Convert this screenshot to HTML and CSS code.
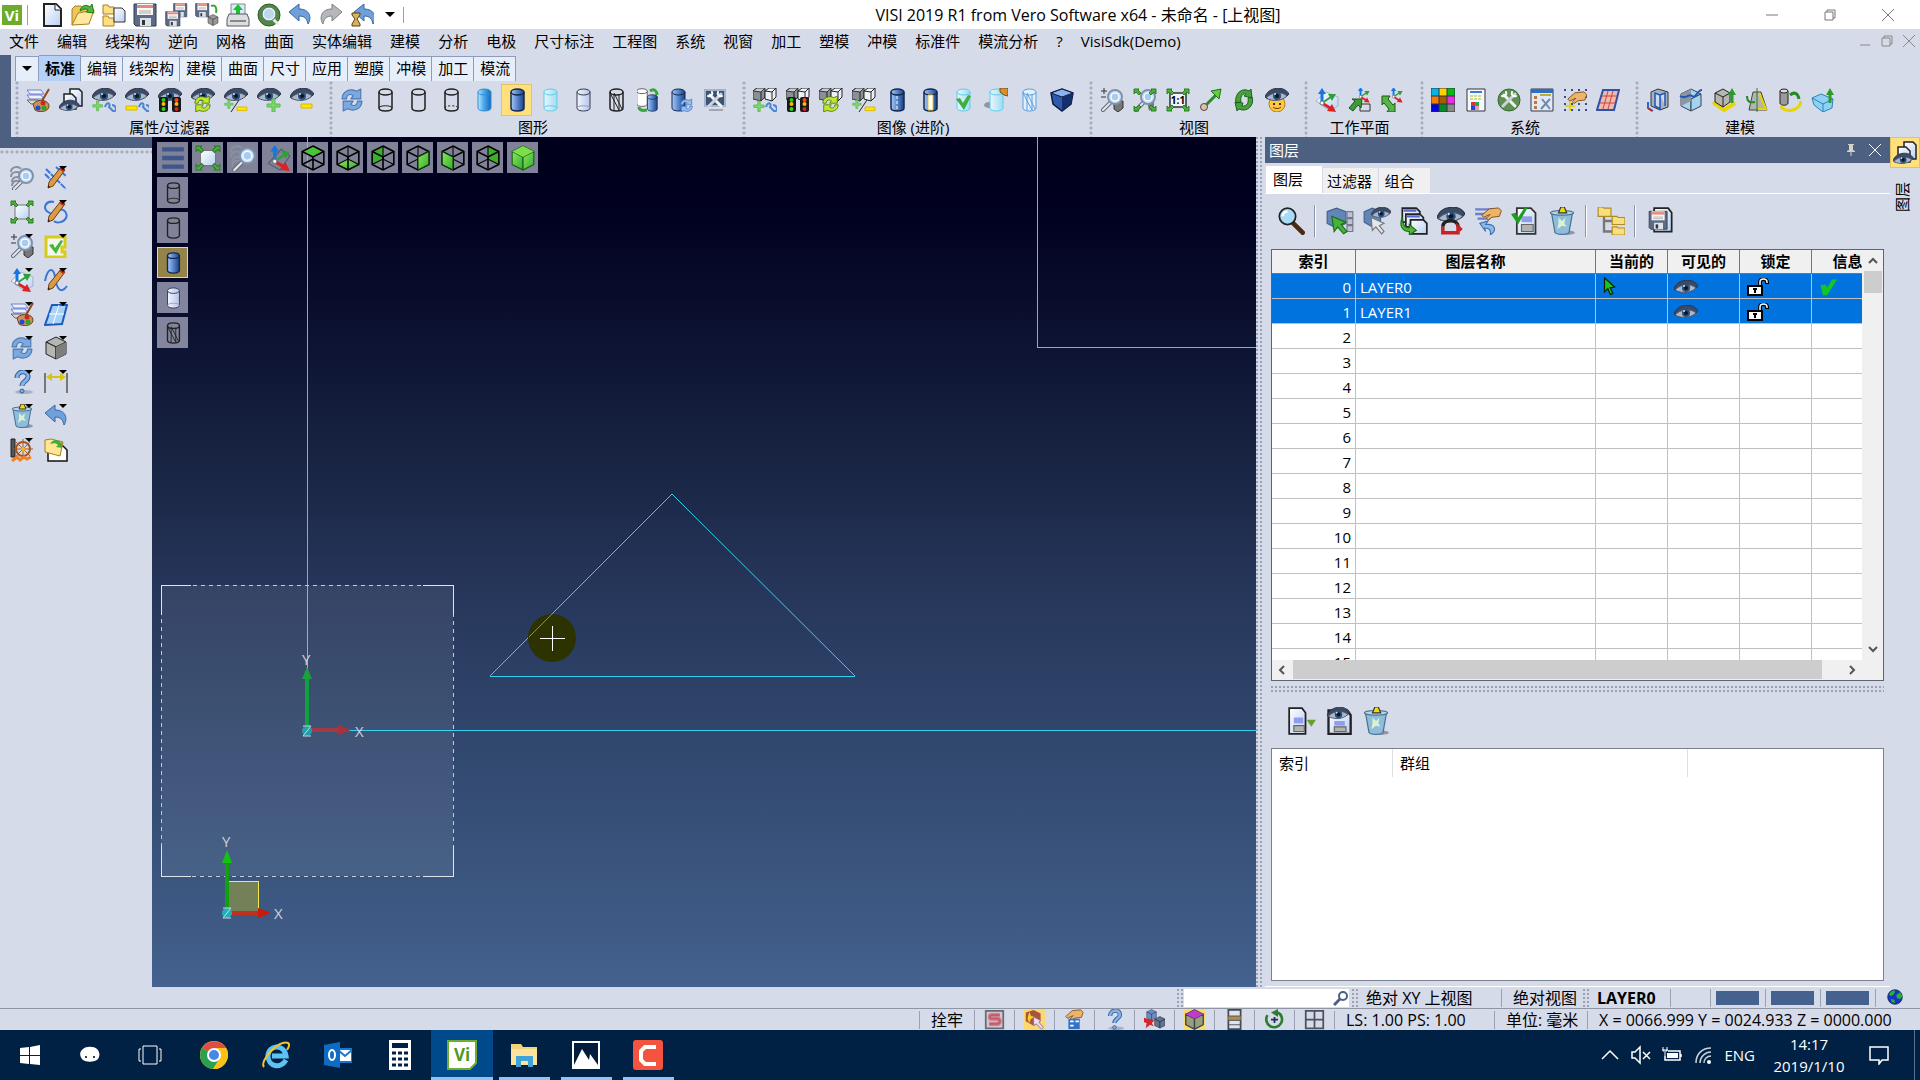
FILE: index.html
```html
<!DOCTYPE html>
<html lang="zh-CN">
<head>
  <meta charset="utf-8">
  <meta name="viewport" content="width=device-width, initial-scale=1">
  <title>VISI 2019 R1 from Vero Software x64</title>
  <link rel="stylesheet" href="styles.css">
</head>
<body>

<!-- icon sprite -->
<svg class="sprite" width="0" height="0" aria-hidden="true">
  <defs>
    <linearGradient id="blue"><stop offset="0" stop-color="#a9c8f5"/><stop offset=".5" stop-color="#5585cc"/><stop offset="1" stop-color="#1d3f80"/></linearGradient>
    <linearGradient id="sky"><stop offset="0" stop-color="#bfe6ff"/><stop offset=".4" stop-color="#4fb0ef"/><stop offset="1" stop-color="#1566b8"/></linearGradient>
    <linearGradient id="pale"><stop offset="0" stop-color="#eaf6ff"/><stop offset="1" stop-color="#9edcf2"/></linearGradient>
    <linearGradient id="glass"><stop offset="0" stop-color="#f2f6ff"/><stop offset="1" stop-color="#b5c4ea"/></linearGradient>
    <linearGradient id="green" x2="1" y2="1"><stop offset="0" stop-color="#8ce65e"/><stop offset="1" stop-color="#33ad2c"/></linearGradient>
    <linearGradient id="page" x2="1" y2="1"><stop offset="0" stop-color="#fff"/><stop offset="1" stop-color="#b9d0f2"/></linearGradient>

    <g id="eye">
      <path d="M0 9C3-1 19-3 24 6l-3 3C16 4 8 4 3 11z" fill="#3d4a63" stroke="#28334a"/>
      <path d="M1 10C6 4 17 3 22 8 17 13 8 14 1 10z" fill="#a9b8cd" stroke="#4a566e"/>
      <circle cx="12" cy="8" r="4" fill="#2b5078"/><circle cx="12" cy="8" r="2" fill="#0d1420"/><circle cx="10" cy="6" r="1" fill="#cfe0f2"/>
    </g>
    <g id="cyl"><path d="M6 4v16c0 4 13 4 13 0V4"/><ellipse cx="12.500" cy="4" rx="6.500" ry="3"/></g>
    <g id="cube" stroke-linejoin="round"><path d="M12 1l10 5-10 5L2 6z"/><path d="M2 6l10 5v12L2 18z"/><path d="M22 6l-10 5v12l10-5z"/></g>
    <g id="cubes"><path d="M0 3l4-3h8v9l-4 4-8-2z" fill="#8b8f96" stroke="#33363b"/><path d="M0 3l4-3h8L8 4z" fill="#c8cbd0" stroke="#33363b"/><path d="M8 4v9" stroke="#222"/><path d="M12 3l4-3h7v9l-4 4-7-2z" fill="#eef1f8" stroke="#222"/><path d="M12 3l7 1 4-4M19 4v9" fill="none" stroke="#222"/></g>
    <path id="plus" d="M6 0h3v5h5v3H9v5H6V8H1V5h5z" fill="#7bd96a" stroke="#5cb850"/>
    <path id="minus" d="M0 0h11v4H0z" fill="#ffe500" stroke="#d6b800"/>
    <path id="wave" d="M1 6c2-6 6-4 4 0l4 4c5 1 3-6-1-6" fill="none" stroke="#4b86d6" stroke-width="2"/>
    <g id="lights"><rect x="1" y="9" width="9" height="15" rx="2" fill="#181818"/><rect x="14" y="9" width="9" height="15" rx="2" fill="#181818"/><circle cx="5.500" cy="12" r="2" fill="#2c2"/><circle cx="5.500" cy="16" r="2" fill="#fb0"/><circle cx="5.500" cy="21" r="2" fill="#2d2"/><circle cx="18.500" cy="12" r="2" fill="#f42"/><circle cx="18.500" cy="16" r="2" fill="#fb0"/><circle cx="18.500" cy="21" r="2" fill="#d22"/></g>
    <g id="cycle" stroke-linejoin="round"><path d="M1 9C1 2 8-1 14 2l4-2v9h-9l2-3C8 4 5 5 5 9z"/><path d="M19 11c0 7-7 10-13 7l-4 2v-9h9l-2 3c3 2 6 1 6-3z"/></g>
    <g id="lens"><path d="M11 14L3 22" stroke="#666b75" stroke-width="4" stroke-linecap="round"/><path d="M11 14L3 22" stroke="#e3e8ef" stroke-width="2" stroke-linecap="round"/><circle cx="15" cy="9" r="7" fill="#cfe3f7" stroke="#7e92ad" stroke-width="2"/><circle cx="15" cy="9" r="4" fill="#a9cbef" stroke="#fff"/></g>
    <g id="corners" fill="#4caf3a" stroke="#2c7d25"><path d="M1 1h5L5 2l3 3-2 2-3-3-2 2z"/><path d="M23 1h-5l1 1-3 3 2 2 3-3 2 2z"/><path d="M1 23h5l-1-1 3-3-2-2-3 3-2-2z"/><path d="M23 23h-5l1-1-3-3 2-2 3 3 2-2z"/></g>
    <g id="axes"><path d="M7 15V4" stroke="#1477e0" stroke-width="3"/><path d="M7 0l4 6H3z" fill="#1477e0"/><path d="M7 15l9-6" stroke="#2fa038" stroke-width="2"/><path d="M21 6l-8 0 4 7z" fill="#2fa038"/><path d="M7 15l8 5" stroke="#d22" stroke-width="3"/><path d="M21 24l-9-1 5-7z" fill="#d22"/><circle cx="7" cy="15" r="2" fill="#fff" stroke="#777"/></g>
    <g id="pencil"><path d="M17 1l4 3L9 20l-5 2 1-6z" fill="#dd9a45" stroke="#6b3d12"/><path d="M17 1l4 3-2 2-4-3z" fill="#c62828"/><path d="M4 22l2-1-2-2z" fill="#222"/></g>
    <g id="floppy"><path d="M1 1h22v22H3l-2-2z" fill="#5d6b86" stroke="#2d3a55"/><path d="M4 1h16v11H4z" fill="#f7f7f7"/><path d="M4 2h16v3H4z" fill="#e58a77"/><path d="M6 8h12M6 10h12" stroke="#aaa"/><path d="M7 15h11v8H7z" fill="#dde2ea"/><path d="M9 17h3v5H9z" fill="#333"/></g>
    <g id="bin"><ellipse cx="15" cy="22" rx="8" ry="2" fill="#8f96a6"/><path d="M3 5h18l-3 17c-2 2-10 2-12 0z" fill="#8ebcda" stroke="#48708f"/><path d="M9 9l3 3 3-3-1 5 2 3-4-1-4 3 1-5z" fill="#d9f3d2"/><ellipse cx="12" cy="5" rx="10" ry="2" fill="#b9d6e8" stroke="#48708f"/><path d="M9 5l2-5h3l2 5z" fill="#f0dc00" stroke="#333"/></g>
    <g id="tools" stroke-linecap="round"><path d="M7 7l11 11" stroke="#f1f1f1" stroke-width="3"/><path d="M18 6L6 18" stroke="#cdd3db" stroke-width="3"/><path d="M5 8a3 3 0 0 0 4-4M19 8a3 3 0 0 1-4-4" fill="none" stroke="#fff" stroke-width="2"/></g>
    <g id="hand"><path d="M2 9l8-7 10-1 3 3-2 6-8 1-4 3-2-2 4-4-7 3z" fill="#eeb469" stroke="#7d4d17"/></g>
    <path id="undo" d="M1 9l10-8v5c11 0 13 9 9 15-1-5-3-8-9-8v5z"/>
    <path id="caret" d="M15 0h8l-4 4z"/>
    <g id="wire" fill="none" stroke="#000" stroke-width="1.500"><path d="M12 1l10 5v12l-10 5-10-5V6z"/><path d="M2 6l10 5 10-5M12 11v12"/><path d="M12 1v12M2 18l10-5 10 5" stroke-width="1"/></g>
  </defs>

  <symbol id="i-new" viewBox="0 0 24 24"><path d="M4 1h12l5 5v17H4z" fill="url(#page)" stroke="#222" stroke-width="2"/><path d="M15 1v6h6" fill="#fff" stroke="#222"/></symbol>
  <symbol id="i-open" viewBox="0 0 24 24"><path d="M1 22V6l3-3h6l2 3h9v4" fill="#eec65a" stroke="#a87f1c"/><path d="M1 22L7 10l16-3-5 14z" fill="#ffe9a0" stroke="#a87f1c"/><path d="M9 8c1-6 7-7 10-4l2-3 2 9-8-1 2-2c-2-2-4-1-8 1z" fill="#4fb53b" stroke="#247a1c"/></symbol>
  <symbol id="i-folders" viewBox="0 0 24 24"><path d="M1 2h5l1 2h5v7H1zM1 13h5l1 2h5v8H1z" fill="#ffdf86" stroke="#a87f1c"/><path d="M12 5h8l3 3v11H12z" fill="url(#page)" stroke="#333"/></symbol>
  <symbol id="i-save" viewBox="0 0 24 24"><use href="#floppy"/></symbol>
  <symbol id="i-saveall" viewBox="0 0 24 24"><use href="#floppy" transform="translate(9) scale(.6)"/><use href="#floppy" transform="translate(1 8) scale(.65)"/></symbol>
  <symbol id="i-saveas" viewBox="0 0 24 24"><use href="#floppy" transform="scale(.6)"/><path d="M16 3c5-2 6 3 5 7" fill="none" stroke="#3aa53a" stroke-width="2"/><use href="#cube" transform="translate(12 11) scale(.5)" fill="#999" stroke="#333"/></symbol>
  <symbol id="i-print" viewBox="0 0 24 24"><path d="M5 1h14v12H5z" fill="#d9ecff" stroke="#888"/><path d="M12 1l5 6h-3v4h-4V7H7z" fill="#1cc22c"/><path d="M3 11h18l2 5v7H1v-7z" fill="#dcdde1" stroke="#55585e"/><path d="M4 18h16" stroke="#888" stroke-width="2"/></symbol>
  <symbol id="i-preview" viewBox="0 0 24 24"><circle cx="12" cy="12" r="11" fill="#4f8a45" stroke="#2d5b28"/><path d="M15 15l6 6" stroke="#e9e9e9" stroke-width="3"/><circle cx="12" cy="11" r="6" fill="#bcd8ea" stroke="#e7eef4" stroke-width="2"/><circle cx="12" cy="11" r="7" fill="none" stroke="#5b6b74"/></symbol>
  <symbol id="i-undo" viewBox="0 0 24 24"><use href="#undo" fill="#6fa0da" stroke="#3a659e"/></symbol>
  <symbol id="i-redo" viewBox="0 0 24 24"><use href="#undo" transform="matrix(-1 0 0 1 24 0)" fill="#b5b7ba" stroke="#7d7f82"/></symbol>
  <symbol id="i-history" viewBox="0 0 24 24"><use href="#undo" transform="translate(3)" fill="#6fa0da" stroke="#3a659e"/><path d="M2 10h8v2l-3 4 3 5v2H2v-2l3-5-3-4z" fill="#d9b25b" stroke="#5b3e12"/></symbol>

  <symbol id="i-palette" viewBox="0 0 24 24"><path d="M1 2h14l3 4H4zM1 7h14l3 4H4z" fill="#eef2ff" stroke="#6c7fd0"/><path d="M1 12h11l3 4H5z" fill="#d5d5d2" stroke="#666"/><path d="M7 16c5-6 16-4 16 2s-10 7-14 4z" fill="#c9925a" stroke="#6d431b"/><circle cx="12" cy="20" r="2.500" fill="#2347d8"/><circle cx="18" cy="20" r="2.500" fill="#28a828"/><circle cx="17" cy="15" r="2.500" fill="#d82222"/><path d="M23 1l-7 12" stroke="#8b4a1c" stroke-width="2"/></symbol>
  <symbol id="i-layers" viewBox="0 0 24 24"><path d="M11 1h9l3 3v14H11z" fill="url(#page)" stroke="#222" stroke-width="1.500"/><path d="M5 6h8l4 4v11H5z" fill="url(#page)" stroke="#222" stroke-width="1.500"/><use href="#eye" transform="translate(0 12) scale(.85)"/></symbol>
  <symbol id="i-eyewave" viewBox="0 0 24 24"><use href="#eye"/><use href="#plus" transform="translate(0 13) scale(.75)"/><use href="#wave" transform="translate(12 13)"/></symbol>
  <symbol id="i-eyeminus" viewBox="0 0 24 24"><use href="#eye"/><use href="#minus" transform="translate(1 18)"/><use href="#wave" transform="translate(13 13)"/></symbol>
  <symbol id="i-eyelights" viewBox="0 0 24 24"><use href="#eye"/><use href="#lights"/></symbol>
  <symbol id="i-eyecycle" viewBox="0 0 24 24"><use href="#eye"/><use href="#cycle" transform="translate(3 8) scale(.85 .8)" fill="#c5e52c" stroke="#3f7a14"/></symbol>
  <symbol id="i-eyepm" viewBox="0 0 24 24"><use href="#eye"/><use href="#plus" transform="translate(0 12) scale(.65)"/><path d="M15 12L7 24" stroke="#222"/><use href="#minus" transform="translate(13 19) scale(.9)"/></symbol>
  <symbol id="i-eyeplus" viewBox="0 0 24 24"><use href="#eye"/><use href="#plus" transform="translate(9 11)"/></symbol>
  <symbol id="i-eyedel" viewBox="0 0 24 24"><use href="#eye"/><use href="#minus" transform="translate(11 16)"/></symbol>

  <symbol id="i-refresh" viewBox="0 0 24 24"><use href="#cycle" transform="translate(1 1) scale(1.100)" fill="#7ba9de" stroke="#4a78b3"/></symbol>
  <symbol id="i-cylwire" viewBox="0 0 24 24"><use href="#cyl" fill="none" stroke="#222" stroke-width="1.500"/><path d="M6 20c0-3 13-3 13 0" fill="none" stroke="#222"/></symbol>
  <symbol id="i-cylhid" viewBox="0 0 24 24"><use href="#cyl" fill="none" stroke="#222" stroke-width="1.500"/></symbol>
  <symbol id="i-cyldash" viewBox="0 0 24 24"><use href="#cyl" fill="none" stroke="#222" stroke-width="1.500"/><path d="M6 20c0-3 13-3 13 0" fill="none" stroke="#222" stroke-dasharray="2 2"/></symbol>
  <symbol id="i-cylsky" viewBox="0 0 24 24"><use href="#cyl" fill="url(#sky)" stroke="#2f8fd6"/></symbol>
  <symbol id="i-cylblue" viewBox="0 0 24 24"><use href="#cyl" fill="url(#blue)" stroke="#14284f" stroke-width="1.500"/></symbol>
  <symbol id="i-cylpale" viewBox="0 0 24 24"><use href="#cyl" fill="url(#pale)" stroke="#5fcdea"/><path d="M6 20c0-3 13-3 13 0" fill="none" stroke="#5fcdea"/></symbol>
  <symbol id="i-cylglass" viewBox="0 0 24 24"><use href="#cyl" fill="url(#glass)" stroke="#333a4f"/><path d="M6 20c0-3 13-3 13 0" fill="none" stroke="#8d9bc0"/></symbol>
  <symbol id="i-cylmesh" viewBox="0 0 24 24"><use href="#cyl" fill="none" stroke="#222" stroke-width="1.500"/><path d="M10 6v16M15 6v16M6 5l9 17M10 5l8 16" stroke="#222"/></symbol>
  <symbol id="i-cylswap" viewBox="0 0 24 24"><use href="#cyl" transform="translate(-5 0) scale(.8)" fill="#fff" stroke="#444"/><use href="#cyl" transform="translate(6 6) scale(.75)" fill="url(#blue)" stroke="#14284f"/><path d="M13 3c4-3 7 0 7 4M2 19c0 3 3 4 8 3" fill="none" stroke="#3aa53a" stroke-width="3"/></symbol>
  <symbol id="i-cylref" viewBox="0 0 24 24"><use href="#cyl" transform="translate(-4 0)" fill="url(#blue)" stroke="#14284f"/><use href="#cycle" transform="translate(10 11) scale(.65)" fill="#8fbdf0" stroke="#3e70b5"/></symbol>
  <symbol id="i-settings" viewBox="0 0 24 24"><path d="M2 2h20v16H2z" fill="#3a5276" stroke="#a7b2c4" stroke-width="2"/><use href="#tools"/><path d="M6 22h14" stroke="#a0a6b4" stroke-width="2"/></symbol>

  <symbol id="i-boxwave" viewBox="0 0 24 24"><use href="#cubes"/><use href="#plus" transform="translate(0 13) scale(.8)"/><use href="#wave" transform="translate(12 13)"/></symbol>
  <symbol id="i-boxlights" viewBox="0 0 24 24"><use href="#cubes"/><use href="#lights"/></symbol>
  <symbol id="i-boxcycle" viewBox="0 0 24 24"><use href="#cubes"/><use href="#cycle" transform="translate(3 8) scale(.85 .8)" fill="#c5e52c" stroke="#3f7a14"/></symbol>
  <symbol id="i-boxpm" viewBox="0 0 24 24"><use href="#cubes"/><use href="#plus" transform="translate(0 12) scale(.65)"/><path d="M15 12L7 24" stroke="#222"/><use href="#minus" transform="translate(13 19) scale(.9)"/></symbol>
  <symbol id="i-cyldot" viewBox="0 0 24 24"><use href="#cyl" fill="url(#blue)" stroke="#14284f" stroke-width="1.500"/><path d="M12 8v15" stroke="#fff" stroke-dasharray="3 2"/></symbol>
  <symbol id="i-cylband" viewBox="0 0 24 24"><use href="#cyl" fill="url(#blue)" stroke="#14284f" stroke-width="1.500"/><path d="M10 7h5v15h-5z" fill="#fff" stroke="#e3c33a"/></symbol>
  <symbol id="i-cylok" viewBox="0 0 24 24"><use href="#cyl" fill="url(#pale)" stroke="#5fcdea"/><path d="M5 11l4-1 3 5 5-8 3 1-7 14z" fill="#3fae3b"/></symbol>
  <symbol id="i-cyltag" viewBox="0 0 24 24"><ellipse cx="5" cy="17" rx="5" ry="3" fill="#8f96a6"/><use href="#cyl" fill="url(#pale)" stroke="#5fcdea"/><path d="M16 0h8v8l-4-1-4-3z" fill="#d6922f" stroke="#7d4d17"/></symbol>
  <symbol id="i-cylnet" viewBox="0 0 24 24"><use href="#cyl" fill="#e2eefb" stroke="#5b9fdd"/><path d="M10 6v16M15 6v16M6 5l9 17M10 5l8 16" stroke="#5b9fdd"/></symbol>
  <symbol id="i-gem" viewBox="0 0 24 24"><path d="M1 5l11-4 11 4-2 11-9 7-9-7z" fill="#2d5aaf" stroke="#0c1d40" stroke-width="1.500"/><path d="M1 5l11 4 11-4-11-4z" fill="#8db4ee" stroke="#0c1d40"/><path d="M12 9v14l9-7 2-11z" fill="#14306c"/></symbol>

  <symbol id="i-zoompm" viewBox="0 0 24 24"><path d="M14 13h9v7l-5 4-4-3z" fill="#777" stroke="#333"/><use href="#lens"/><path d="M1 3h6M4 0v6M1 9h5" stroke="#333"/></symbol>
  <symbol id="i-zoomfit" viewBox="0 0 24 24"><path d="M14 13h7v7l-5 3z" fill="#777"/><use href="#lens"/><use href="#corners"/></symbol>
  <symbol id="i-arrow" viewBox="0 0 24 24"><path d="M5 19L18 6" stroke="#2b8c2b" stroke-width="3"/><path d="M22 1l-2 10-8-8z" fill="#5fcf3e" stroke="#20701d"/><circle cx="5" cy="19" r="3.500" fill="#d8c3b2" stroke="#5b4636"/></symbol>
  <symbol id="i-orbit" viewBox="0 0 24 24"><path d="M4 15C2 6 10-1 17 3l2-2 1 9-8-2 2-2c-4-1-6 3-5 8zM20 9c3 8-5 16-13 12l-2 2-2-9 8 1-1 3c5 1 7-4 6-8z" fill="#45a33a" stroke="#1e5f1b"/></symbol>
  <symbol id="i-face" viewBox="0 0 24 24"><circle cx="12" cy="16" r="8" fill="#ffc843" stroke="#b97c10"/><use href="#eye"/><circle cx="9" cy="16" r="1"/><circle cx="15" cy="16" r="1"/><path d="M8 19c2 2 6 2 8 0" fill="none" stroke="#5c3600"/></symbol>
  <symbol id="i-axes" viewBox="0 0 24 24"><path d="M1 13L11 4l12 5v9l-8 5z" fill="url(#page)" stroke="#9fb3cc"/><use href="#axes"/></symbol>
  <symbol id="i-axesdark" viewBox="0 0 24 24"><path d="M3 17L15 4l8 6-9 13z" fill="none" stroke="#555b6a"/><use href="#axes" transform="translate(2)"/></symbol>
  <symbol id="i-axesto" viewBox="0 0 24 24"><use href="#axes" transform="translate(8 -1) scale(.65)"/><path d="M12 16h10v7H12z" fill="none" stroke="#333"/><path d="M1 20l6-7-3-2h10l-1 9-3-3-5 6z" fill="#3d9c35" stroke="#1c5718"/></symbol>
  <symbol id="i-axesswap" viewBox="0 0 24 24"><use href="#axes" transform="translate(8 -1) scale(.65)"/><path d="M1 8h8l-2 3 5 6 2-2v9H6l2-3-5-6-2 2z" fill="#55b545" stroke="#1c5718"/></symbol>
  <symbol id="i-colors" viewBox="0 0 24 24"><path d="M0 0h8v8H0z" fill="#00b7e8"/><path d="M8 0h8v8H8z" fill="#ffd400"/><path d="M16 0h8v8h-8z" fill="#0b1"/><path d="M0 8h8v8H0z" fill="#f57c00"/><path d="M8 8h8v8H8z" fill="#a65b00"/><path d="M16 8h8v8h-8z" fill="#f02be8"/><path d="M0 16h8v8H0z" fill="#00d"/><path d="M8 16h8v8H8z" fill="#078a24"/><path d="M16 16h8v8h-8z" fill="#888"/><path d="M0 0h24v24H0zM8 0v24M16 0v24M0 8h24M0 16h24" fill="none" stroke="#334"/></symbol>
  <symbol id="i-doc" viewBox="0 0 24 24"><path d="M3 1h18v22H3z" fill="#f4f8ff" stroke="#333"/><path d="M6 4h12" stroke="#3a7bd0" stroke-width="2"/><path d="M6 8h12M6 11h12" stroke="#b8b431" stroke-dasharray="3 1"/><path d="M7 14h4v4H7z" fill="#d33"/><path d="M11 14h4v4h-4z" fill="#2a4"/><path d="M7 18h4v4H7z" fill="#24d"/><path d="M11 18h4v4h-4z" fill="#e9a"/></symbol>
  <symbol id="i-wrench" viewBox="0 0 24 24"><circle cx="12" cy="12" r="11" fill="#5c9150" stroke="#3d6436"/><use href="#tools"/></symbol>
  <symbol id="i-config" viewBox="0 0 24 24"><path d="M1 1h22v22H1z" fill="#dfe9f8" stroke="#333c4f"/><path d="M1 1h22v4H1z" fill="#2f6fc1"/><path d="M4 8h3v3H4zM4 13h3v3H4zM4 18h3v3H4z" fill="#c0763a"/><path d="M10 7h11" stroke="#c2aa2c" stroke-width="2"/><path d="M11 21l9-10M12 11l8 10" stroke="#7486a6" stroke-width="2"/></symbol>
  <symbol id="i-snap" viewBox="0 0 24 24"><path d="M1 2h23M1 9h23M1 16h23M1 22h23" stroke="#34508c" stroke-width="2" stroke-dasharray="2 5"/><use href="#hand" transform="translate(3 3) scale(.9)"/><path d="M7 13v10M2 18h10" stroke="#e7d21b" stroke-width="2"/></symbol>
  <symbol id="i-grid" viewBox="0 0 24 24"><path d="M7 2h16l-5 20H1z" fill="#f2b7ae" stroke="#2b53a8" stroke-width="2"/><path d="M12 3L7 21M17 3l-5 18M6 8h15M4 15h15" stroke="#c8493c"/></symbol>
  <symbol id="i-block" viewBox="0 0 24 24"><path d="M5 4l7-3 10 3v15l-8 3-9-4z" fill="#a9b0ba" stroke="#30343b"/><path d="M9 5v13l5 3V7zM14 7l5-2v13" fill="#c9d9f0" stroke="#1b57b8" stroke-width="1.500"/><path d="M2 14v6l5 3" stroke="#1a6fd6" fill="none" stroke-width="2"/><path d="M2 20l4 3" stroke="#c22" stroke-width="2"/></symbol>
  <symbol id="i-split" viewBox="0 0 24 24"><use href="#cube" fill="#a4d3ef" stroke="#39424f"/><path d="M2 6l10-5v12L2 18z" fill="#8f959f"/><path d="M1 8c7 4 8-3 12 0s5-6 10-6" fill="none" stroke="#2058b8" stroke-width="2"/></symbol>
  <symbol id="i-extrude" viewBox="0 0 24 24"><path d="M1 14l11 8 11-7" fill="none" stroke="#e9d500" stroke-width="4"/><path d="M3 5l8-4 7 4v9l-7 5-8-5z" fill="#b6b6b0" stroke="#222"/><path d="M3 5l8 4 7-4M11 9v10" fill="none" stroke="#222"/><path d="M20 15V5" stroke="#2c9a2c" stroke-width="3"/><path d="M20 0l4 7h-8z" fill="#2c9a2c"/></symbol>
  <symbol id="i-revolve" viewBox="0 0 24 24"><path d="M8 4h8l6 18H4z" fill="#b4b4ae" stroke="#444"/><path d="M14 5l7 16h-8" fill="none" stroke="#e9d500" stroke-width="2"/><path d="M12 0v24" stroke="#2a7a2a"/><path d="M2 8c0 6 3 7 8 6" fill="none" stroke="#278a2a" stroke-width="2"/></symbol>
  <symbol id="i-sweep" viewBox="0 0 24 24"><path d="M2 3v12c0 3 8 3 8 0V3" fill="#9a9a98" stroke="#222"/><ellipse cx="6" cy="3" rx="4" ry="2" fill="#ddd" stroke="#222"/><path d="M3 18c2 7 19 6 20-5" fill="none" stroke="#e9d500" stroke-width="3"/><path d="M12 7c5-4 8-1 9 4" fill="none" stroke="#278a2a" stroke-width="3"/></symbol>
  <symbol id="i-surface" viewBox="0 0 24 24"><path d="M1 10l9-4 12 5-1 9-9 4-9-7z" fill="#8ed1f2" stroke="#2f82bb"/><path d="M1 10l11 6 10-5M12 16v8" fill="none" stroke="#2f82bb"/><path d="M19 15V5" stroke="#2c9a2c" stroke-width="3"/><path d="M19 0l4 7h-8z" fill="#2c9a2c"/></symbol>

  <symbol id="i-zooms" viewBox="0 0 24 24"><path d="M1 6c0-6 8-6 10-3M1 11c0-6 8-6 10-3M2 16c0-5 5-6 8-4M2 20c0-4 3-6 7-5" fill="none" stroke="#8a919e" stroke-width="2"/><use href="#lens" transform="translate(1 1)"/></symbol>
  <symbol id="i-fit" viewBox="0 0 24 24"><path d="M5 5h14v14H5z" fill="url(#page)" stroke="#777"/><use href="#corners"/></symbol>
  <symbol id="i-line" viewBox="0 0 24 24"><path d="M2 3l20 20M1 8l6 6M12 1l10 9" stroke="#3a76d6" stroke-width="2" stroke-dasharray="6 1"/><use href="#pencil"/><use href="#caret"/></symbol>
  <symbol id="i-curve" viewBox="0 0 24 24"><path d="M10 2C2 0-2 8 4 12s8 0 12-2 8 4 6 8-9 6-12 3" fill="none" stroke="#3a76d6" stroke-width="2"/><use href="#pencil"/><use href="#caret"/></symbol>
  <symbol id="i-check" viewBox="0 0 24 24"><path d="M2 3h19v10h-3v5h3v5H2z" fill="#f4f6f0" stroke="#d9cb17" stroke-width="3"/><path d="M5 11l4-1 2 4 6-8 2 1-7 13z" fill="#44b53c"/><use href="#caret"/></symbol>
  <symbol id="i-spline" viewBox="0 0 24 24"><path d="M1 13C4-2 10 0 11 9s5 19 12 9" fill="none" stroke="#3a76d6" stroke-width="2"/><use href="#pencil"/><use href="#caret"/></symbol>
  <symbol id="i-plane" viewBox="0 0 24 24"><path d="M8 3h15l-5 19-17 1z" fill="#a9d2fa" stroke="#1d5cb8" stroke-width="2"/><path d="M15 3l-6 19M5 12h15" stroke="#fff"/><use href="#caret"/></symbol>
  <symbol id="i-solid" viewBox="0 0 24 24"><use href="#cube" fill="#b5b6b3" stroke="#222"/><path d="M22 6l-10 5v12l10-5z" fill="#7e7f7d"/><use href="#caret"/></symbol>
  <symbol id="i-help" viewBox="0 0 24 24"><ellipse cx="14" cy="22" rx="9" ry="2" fill="#a9b0c2"/><path d="M7 8c0-8 12-8 11-1 0 4-6 4-6 9" fill="none" stroke="#325f9f" stroke-width="5"/><path d="M7 8c0-8 12-8 11-1 0 4-6 4-6 9" fill="none" stroke="#86b1e4" stroke-width="3"/><circle cx="12" cy="21" r="2" fill="#86b1e4" stroke="#325f9f"/></symbol>
  <symbol id="i-dim" viewBox="0 0 24 24"><path d="M1 3v20M23 3v20" stroke="#777" stroke-width="2"/><path d="M4 7h16" stroke="#d8c40c" stroke-width="2"/><path d="M2 7l6-4v8zM22 7l-6-4v8z" fill="#d8c40c"/><use href="#caret"/></symbol>
  <symbol id="i-bin" viewBox="0 0 24 24"><use href="#bin"/></symbol>
  <symbol id="i-helm" viewBox="0 0 24 24"><path d="M1 1h4v18H1z" fill="#555" stroke="#222"/><circle cx="13" cy="11" r="7" fill="none" stroke="#a5561f" stroke-width="2"/><path d="M13 1v20M3 11h20M6 4l14 14M20 4L6 18" stroke="#a5561f"/><path d="M2 23l5-4 3 3 4-3 3 2 4-2" fill="none" stroke="#f08020" stroke-width="3"/><circle cx="13" cy="11" r="2" fill="#ffb31a"/></symbol>
  <symbol id="i-import" viewBox="0 0 24 24"><path d="M4 8h15l4 4v11H4z" fill="#fff" stroke="#111" stroke-width="1.500"/><path d="M1 2l6-1 12 3-3 14L1 14z" fill="#ffe694" stroke="#a5801e"/><path d="M6 6c3-5 8-5 11-1l1-2v7l-6-1 2-2c-2-2-4-2-8-1z" fill="#43ad35"/></symbol>

  <symbol id="i-top" viewBox="0 0 24 24"><path d="M12 1l10 5-10 5L2 6z" fill="#4cc437"/><path d="M12 1l10 5v12l-10 5-10-5V6zM2 6l10 5 10-5M12 11v12M2 18l10-5 10 5" fill="none" stroke="#000" stroke-width="1.500"/></symbol>
  <symbol id="i-bottom" viewBox="0 0 24 24"><path d="M12 13l10 5-10 5-10-5z" fill="url(#green)"/><use href="#wire"/></symbol>
  <symbol id="i-back" viewBox="0 0 24 24"><path d="M2 6l10-5v12L2 18z" fill="#3cb02e"/><use href="#wire"/></symbol>
  <symbol id="i-front" viewBox="0 0 24 24"><use href="#wire"/><path d="M12 11l10-5v12l-10 5z" fill="url(#green)" stroke="#0c3a08"/></symbol>
  <symbol id="i-left" viewBox="0 0 24 24"><use href="#wire"/><path d="M2 6l10 5v12L2 18z" fill="url(#green)" stroke="#0c3a08"/></symbol>
  <symbol id="i-right" viewBox="0 0 24 24"><path d="M12 1l10 5v12l-10-5z" fill="#3cb02e"/><use href="#wire"/></symbol>
  <symbol id="i-iso" viewBox="0 0 24 24"><use href="#cube" fill="url(#green)" stroke="#155c10"/><path d="M12 1l10 5-10 5L2 6z" fill="#7dde4c"/></symbol>
  <symbol id="i-bars" viewBox="0 0 24 24"><path d="M2 4h20M2 12h20M2 20h20" stroke="#3f568b" stroke-width="4"/></symbol>

  <symbol id="i-search" viewBox="0 0 24 24"><path d="M14 14l8 8" stroke="#4b2a14" stroke-width="4" stroke-linecap="round"/><circle cx="9" cy="8" r="7" fill="#a9daf6" stroke="#222" stroke-width="1.500"/><path d="M5 8c0-3 2-4 4-4" fill="none" stroke="#fff" stroke-width="2"/></symbol>
  <symbol id="i-pick" viewBox="0 0 24 24"><path d="M1 4l8-3 8 3v10l-8 4-8-4z" fill="#6386b8" stroke="#43618d"/><path d="M18 4h5v5h-5zM18 10h5v5h-5zM18 16h5v5h-5z" fill="#b9c6d4" stroke="#778"/><path d="M5 8l12 5-4 2 5 6-3 2-5-6-3 4z" fill="#46b23a" stroke="#1f6d1a"/></symbol>
  <symbol id="i-pickeye" viewBox="0 0 24 24"><path d="M1 4l7-3 7 3v9l-7 4-7-4z" fill="#6386b8" stroke="#43618d"/><use href="#eye" transform="translate(7) scale(.72)"/><path d="M7 9l11 5-4 2 4 5-2 2-5-6-3 3z" fill="#e4e7ee" stroke="#777"/></symbol>
  <symbol id="i-sheets" viewBox="0 0 24 24"><path d="M2 1h12l3 3v9H2z" fill="url(#page)" stroke="#222" stroke-width="1.500"/><path d="M5 6h12l3 3v8H5z" fill="url(#page)" stroke="#222" stroke-width="1.500"/><path d="M9 11h11l3 3v9H9z" fill="url(#page)" stroke="#222" stroke-width="1.500"/><path d="M3 3h11M6 8h11" stroke="#5966cf" stroke-width="2"/><path d="M2 9c0 6 2 9 6 9v-3l6 5-6 4v-3c-6 0-9-5-6-12z" fill="#4fb53b" stroke="#1f6d1a"/></symbol>
  <symbol id="i-eyered" viewBox="0 0 24 24"><use href="#eye"/><path d="M5 17c0-7 13-7 13 0" fill="none" stroke="#222" stroke-width="3"/><path d="M5 17v5h13v-5l3 3" fill="none" stroke="#c92222" stroke-width="3"/></symbol>
  <symbol id="i-handlayer" viewBox="0 0 24 24"><path d="M1 2h14M1 6h12M3 10h11" stroke="#6c7fd0" stroke-width="2"/><use href="#hand" transform="translate(5)scale(.8)"/><path d="M5 14l7-2-2 3c8-1 10 5 4 9 1-5-2-6-5-6l1 3z" fill="#8fb9e8" stroke="#4173b2"/></symbol>
  <symbol id="i-checkdoc" viewBox="0 0 24 24"><path d="M5 1h12l4 4v18H5z" fill="url(#page)" stroke="#333" stroke-width="1.500"/><path d="M9 8h9v5H9z" fill="#8f9cf0"/><path d="M9 15h10v6H9z" fill="#b3b3ae" stroke="#666"/><path d="M0 6l4-1 2 4 6-9 2 1-8 14z" fill="#1f9c1f"/></symbol>
  <symbol id="i-tree" viewBox="0 0 24 24"><path d="M6 8v13h9M6 12h9" fill="none" stroke="#777" stroke-width="2"/><path d="M1 0h4l1 1h6v7H1zM13 8h4l1 1h6v6H13zM13 17h4l1 1h6v6H13z" fill="#f8df7d" stroke="#b18b26"/></symbol>
  <symbol id="i-savedoc" viewBox="0 0 24 24"><path d="M7 1h12l3 4v16H7z" fill="url(#page)" stroke="#222" stroke-width="1.500"/><use href="#floppy" transform="translate(2 3) scale(.7)"/></symbol>
  <symbol id="i-adddoc" viewBox="0 0 24 24"><path d="M1 1h11l3 4v18H1z" fill="url(#page)" stroke="#222" stroke-width="1.500"/><path d="M5 9h8v5H5z" fill="#8f9cf0"/><path d="M5 16h9v5H5z" fill="#b3b3ae" stroke="#666"/><path d="M16 11h8l-4 6z" fill="#67a02f"/></symbol>
  <symbol id="i-eyedoc" viewBox="0 0 24 24"><path d="M3 3h16l3 4v16H3z" fill="url(#page)" stroke="#222" stroke-width="2"/><path d="M8 12h9v4H8z" fill="#8f9cf0"/><path d="M8 17h10v4H8z" fill="#b3b3ae" stroke="#666"/><use href="#eye" transform="translate(2 0) scale(.8)"/></symbol>
  <symbol id="i-cursor" viewBox="0 0 24 24"><path d="M3 1l12 11-5 1 3 7-3 1-3-7-4 4z" fill="#1fc41f" stroke="#06260a" stroke-width="1.500"/></symbol>
  <symbol id="i-eye" viewBox="0 0 24 14"><use href="#eye"/></symbol>
  <symbol id="i-lock" viewBox="0 0 24 18"><path d="M14 8V4c0-4 7-4 7 0v2" fill="none" stroke="#000" stroke-width="4"/><path d="M14 8V4c0-4 7-4 7 0v1" fill="none" stroke="#fff" stroke-width="1.500"/><path d="M2 8h14v9H2z" fill="#fff" stroke="#000" stroke-width="2"/><path d="M7 10h4v2h-1v3H8v-3H7z"/></symbol>
  <symbol id="i-tick" viewBox="0 0 24 24"><path d="M3 10l6-1 2 4 6-10h6L11 22H6z" fill="#12c626"/></symbol>
  <symbol id="i-min" viewBox="0 0 12 12"><path d="M0 6h12" stroke="currentColor"/></symbol>
  <symbol id="i-minlow" viewBox="0 0 12 12"><path d="M1 10h10" stroke="currentColor"/></symbol>
  <symbol id="i-restore" viewBox="0 0 12 12"><path d="M1 3h8v8H1zM3 3V1h8v8H9" fill="none" stroke="currentColor"/></symbol>
  <symbol id="i-x" viewBox="0 0 12 12"><path d="M0 0l12 12M12 0L0 12" stroke="currentColor"/></symbol>
  <symbol id="i-pin" viewBox="0 0 12 12"><path d="M3 0h6v1H8v5l2 1v1H2V7l2-1V1H3z" fill="#d3d2c4"/><path d="M6 7v5" stroke="#d3d2c4"/></symbol>
  <symbol id="i-chev" viewBox="0 0 12 12"><path d="M2 8l4-4 4 4" fill="none" stroke="currentColor" stroke-width="2"/></symbol>

  <symbol id="s-snap" viewBox="0 0 24 24"><path d="M2 2h20v20H2z" fill="#cfc6d2" stroke="#666b76" stroke-width="2"/><path d="M18 7H9c-3 0-3 4 0 4h6c4 0 4 6 0 6H6" fill="none" stroke="#d0808f" stroke-width="5"/><path d="M18 7H9c-3 0-3 4 0 4h6c4 0 4 6 0 6H6" fill="none" stroke="#c9586b" stroke-width="2"/></symbol>
  <symbol id="s-magic" viewBox="0 0 24 24"><path d="M0 0h24v24H0z" fill="#fbd970"/><path d="M2 4l9-3 8 4v9l-8 5-9-5z" fill="#a8553c"/><path d="M6 3l2 5 5 1-5 2-2 5-2-5z" fill="#f2d128"/><path d="M11 9l8 4-2 2 5 6-2 2-6-6-3 2z" fill="#eedcf0" stroke="#8d6b9d"/></symbol>
  <symbol id="s-hand" viewBox="0 0 24 24"><use href="#hand" transform="scale(.95)"/><path d="M5 11h13v12H5z" fill="#3273c8"/><path d="M7 14h4M13 14h4M7 19h4" stroke="#fff" stroke-width="2"/></symbol>
  <symbol id="s-boxes" viewBox="0 0 24 24"><use href="#cube" transform="translate(2 0) scale(.55)" fill="#6c8ec2" stroke="#1f3558"/><use href="#cube" transform="translate(11 8) scale(.6)" fill="#62748e" stroke="#16202f"/><path d="M0 10l12 3-3 3 2 4-4-2-5 4 1-6-3-1z" fill="#d82626"/></symbol>
  <symbol id="s-plane" viewBox="0 0 24 24"><path d="M0 0h24v24H0z" fill="#fbd970"/><use href="#cube" fill="#97a07c" stroke="#39424f" stroke-width="1.500"/><path d="M12 1l10 5-10 5L2 6z" fill="#c43ac8"/></symbol>
  <symbol id="s-stack" viewBox="0 0 24 24"><path d="M5 1h14v22H5z" fill="#dfe3ea" stroke="#444b57" stroke-width="2"/><path d="M5 8h14v5H5z" fill="#b08b4e"/><path d="M5 8h14M5 13h14M5 18h14" stroke="#444b57"/></symbol>
  <symbol id="s-rotate" viewBox="0 0 24 24"><path d="M4 7a9 9 0 1 0 12-3" fill="none" stroke="#2b7d2f" stroke-width="3"/><path d="M8 4l8-4v9z" fill="#2b7d2f"/><path d="M12 9v7M8 12h8" stroke="#222b55" stroke-width="2"/></symbol>
  <symbol id="s-quad" viewBox="0 0 24 24"><path d="M2 2h20v20H2zM12 3v18M3 12h18" fill="none" stroke="#4c525d" stroke-width="2"/></symbol>
  <symbol id="s-globe" viewBox="0 0 24 24"><circle cx="12" cy="12" r="11" fill="#1a33c4" stroke="#0b1240"/><path d="M3 8c3-5 6-6 9-6l-1 5-5 4zM14 9l6-4 3 6-3 4-5-1zM6 15l5 1 1 5-5-1z" fill="#25b52b"/></symbol>

  <symbol id="t-win" viewBox="0 0 20 20"><path d="M0 3l9-1v8H0zM10 2l10-2v10H10zM0 11h9v8l-9-1zM10 11h10v9l-10-1z" fill="#fff"/></symbol>
  <symbol id="t-bot" viewBox="0 0 20 20"><path d="M3 4c3-3 11-3 14 0s3 7 1 10-13 4-16 0-2-8 1-10z" fill="#fff"/><circle cx="6" cy="12" r="1"/><circle cx="14" cy="12" r="1"/></symbol>
  <symbol id="t-view" viewBox="0 0 24 20"><path d="M5 1h14v18H5zM3 4H1v12h2M21 4h2v12h-2" fill="none" stroke="#fff"/></symbol>
  <symbol id="t-chrome" viewBox="0 0 28 28"><circle cx="14" cy="14" r="14" fill="#fbc116"/><path d="M14 14L2 7a14 14 0 0 1 24 0z" fill="#dd4f43"/><path d="M2 7a14 14 0 0 0 11 21l7-11-6-3z" fill="#2aa053"/><path d="M14 7h12A14 14 0 0 1 13 28l7-11z" fill="#fbc116"/><circle cx="14" cy="14" r="6" fill="#4a86e8" stroke="#fff" stroke-width="2"/></symbol>
  <symbol id="t-ie" viewBox="0 0 28 28"><path d="M24 19c-5 9-18 7-18-4S22 2 24 15H10" fill="none" stroke="#5cc3f5" stroke-width="5"/><path d="M2 26C-3 20 17-2 26 2c2 1 1 4-1 7" fill="none" stroke="#f4c430" stroke-width="2"/></symbol>
  <symbol id="t-outlook" viewBox="0 0 28 28"><path d="M14 8h14v13H14z" fill="#fff" stroke="#1278d4" stroke-width="2"/><path d="M14 9l7 6 7-6" fill="none" stroke="#1278d4" stroke-width="2"/><path d="M0 4l16-3v26L0 24z" fill="#0f6cc4"/><ellipse cx="8" cy="14" rx="3" ry="5" fill="none" stroke="#fff" stroke-width="2"/></symbol>
  <symbol id="t-calc" viewBox="0 0 22 30"><path d="M0 0h22v30H0z" fill="#fff"/><path d="M3 3h16v5H3z" fill="#002144"/><path d="M3 13h17M3 19h17M3 25h17" stroke="#002144" stroke-width="3" stroke-dasharray="4 2"/></symbol>
  <symbol id="t-files" viewBox="0 0 28 28"><path d="M1 3h10l2 3h14v18H1z" fill="#f4d27a"/><path d="M1 8h26v16H1z" fill="#fde29b"/><path d="M6 26V15h17v11h-5v-6h-7v6z" fill="#3fa3d8"/></symbol>
  <symbol id="t-photo" viewBox="0 0 28 28"><path d="M1 1h26v26H1z" fill="#001d3d" stroke="#fff" stroke-width="2"/><path d="M2 24l8-16 7 11 1-6 8 11v3H2z" fill="#fff"/></symbol>
  <symbol id="t-cam" viewBox="0 0 30 30"><rect width="30" height="30" rx="3" fill="#f4543f"/><path d="M23 7H12L8 11v9l4 4h11" fill="none" stroke="#fff" stroke-width="4"/></symbol>
  <symbol id="t-up" viewBox="0 0 20 20"><path d="M2 14l8-8 8 8" fill="none" stroke="#fff" stroke-width="1.500"/></symbol>
  <symbol id="t-mute" viewBox="0 0 20 20"><path d="M1 7h3l5-5v16l-5-5H1zM12 7l7 7M19 7l-7 7" fill="none" stroke="#fff" stroke-width="1.500"/></symbol>
  <symbol id="t-battery" viewBox="0 0 20 20"><path d="M6 6h12v9H3v-4M19 9v3" fill="none" stroke="#fff" stroke-width="1.500"/><path d="M5 8h11v5H5z" fill="#fff"/><path d="M3 7v4M1 2v4h4V2M0 5h6" fill="none" stroke="#fff"/></symbol>
  <symbol id="t-wifi" viewBox="0 0 20 20"><path d="M3 18C3 9 9 3 18 3M7 18c0-6 5-11 11-11M11 18c0-4 3-7 7-7" fill="none" stroke="#c8d2de" stroke-width="1.500"/><circle cx="16" cy="17" r="2" fill="#fff"/></symbol>
  <symbol id="t-note" viewBox="0 0 20 20"><path d="M1 2h18v13h-6l-3 4v-4H1z" fill="none" stroke="#fff" stroke-width="1.500"/></symbol>
</svg>

<header class="titlebar">
  <div class="quick">
    <span class="logo">Vi</span>
    <button aria-label="新建"><svg><use href="#i-new"/></svg></button>
    <button aria-label="打开"><svg><use href="#i-open"/></svg></button>
    <button aria-label="文件夹"><svg><use href="#i-folders"/></svg></button>
    <button aria-label="保存"><svg><use href="#i-save"/></svg></button>
    <button aria-label="全部保存"><svg><use href="#i-saveall"/></svg></button>
    <button aria-label="另存为"><svg><use href="#i-saveas"/></svg></button>
    <button aria-label="打印"><svg><use href="#i-print"/></svg></button>
    <button aria-label="预览"><svg><use href="#i-preview"/></svg></button>
    <button aria-label="撤销"><svg><use href="#i-undo"/></svg></button>
    <button aria-label="重做"><svg><use href="#i-redo"/></svg></button>
    <button aria-label="历史"><svg><use href="#i-history"/></svg></button>
    <button class="more" aria-label="更多"></button>
  </div>
  <h1>VISI 2019 R1 from Vero Software x64 - 未命名 - [上视图]</h1>
  <div class="winctl">
    <button aria-label="最小化"><svg><use href="#i-min"/></svg></button>
    <button aria-label="还原"><svg><use href="#i-restore"/></svg></button>
    <button aria-label="关闭"><svg><use href="#i-x"/></svg></button>
  </div>
</header>

<nav class="menu">
  <a href="#">文件</a><a href="#">编辑</a><a href="#">线架构</a><a href="#">逆向</a><a href="#">网格</a><a href="#">曲面</a><a href="#">实体编辑</a><a href="#">建模</a><a href="#">分析</a><a href="#">电极</a><a href="#">尺寸标注</a><a href="#">工程图</a><a href="#">系统</a><a href="#">视窗</a><a href="#">加工</a><a href="#">塑模</a><a href="#">冲模</a><a href="#">标准件</a><a href="#">模流分析</a><a href="#">?</a><a href="#">VisiSdk(Demo)</a>
  <div class="mdictl">
    <button aria-label="最小化"><svg><use href="#i-minlow"/></svg></button>
    <button aria-label="还原"><svg><use href="#i-restore"/></svg></button>
    <button aria-label="关闭"><svg><use href="#i-x"/></svg></button>
  </div>
</nav>

<section class="ribbon">
  <div class="tabs">
    <button class="more" aria-label="选项卡列表"></button>
    <button class="active">标准</button><button>编辑</button><button>线架构</button><button>建模</button><button>曲面</button><button>尺寸</button><button>应用</button><button>塑膜</button><button>冲模</button><button>加工</button><button>模流</button>
  </div>
  <div class="groups">
    <div class="group">
      <div class="tools">
        <button aria-label="属性"><svg><use href="#i-palette"/></svg></button>
        <button aria-label="图层"><svg><use href="#i-layers"/></svg></button>
        <button aria-label="显示加"><svg><use href="#i-eyewave"/></svg></button>
        <button aria-label="显示减"><svg><use href="#i-eyeminus"/></svg></button>
        <button aria-label="过滤"><svg><use href="#i-eyelights"/></svg></button>
        <button aria-label="反转"><svg><use href="#i-eyecycle"/></svg></button>
        <button aria-label="加减"><svg><use href="#i-eyepm"/></svg></button>
        <button aria-label="显示"><svg><use href="#i-eyeplus"/></svg></button>
        <button aria-label="隐藏"><svg><use href="#i-eyedel"/></svg></button>
      </div>
      <span>属性/过滤器</span>
    </div>
    <div class="group">
      <div class="tools">
        <button aria-label="刷新"><svg><use href="#i-refresh"/></svg></button>
        <button aria-label="线框"><svg><use href="#i-cylwire"/></svg></button>
        <button aria-label="消隐"><svg><use href="#i-cylhid"/></svg></button>
        <button aria-label="虚线"><svg><use href="#i-cyldash"/></svg></button>
        <button aria-label="着色"><svg><use href="#i-cylsky"/></svg></button>
        <button class="on" aria-label="着色带边"><svg><use href="#i-cylblue"/></svg></button>
        <button aria-label="透明"><svg><use href="#i-cylpale"/></svg></button>
        <button aria-label="透明带边"><svg><use href="#i-cylglass"/></svg></button>
        <button aria-label="网格"><svg><use href="#i-cylmesh"/></svg></button>
        <button aria-label="切换"><svg><use href="#i-cylswap"/></svg></button>
        <button aria-label="更新"><svg><use href="#i-cylref"/></svg></button>
        <button aria-label="设置"><svg><use href="#i-settings"/></svg></button>
      </div>
      <span>图形</span>
    </div>
    <div class="group">
      <div class="tools">
        <button aria-label="添加"><svg><use href="#i-boxwave"/></svg></button>
        <button aria-label="过滤"><svg><use href="#i-boxlights"/></svg></button>
        <button aria-label="反转"><svg><use href="#i-boxcycle"/></svg></button>
        <button aria-label="加减"><svg><use href="#i-boxpm"/></svg></button>
        <button aria-label="轴线"><svg><use href="#i-cyldot"/></svg></button>
        <button aria-label="条纹"><svg><use href="#i-cylband"/></svg></button>
        <button aria-label="确认"><svg><use href="#i-cylok"/></svg></button>
        <button aria-label="标签"><svg><use href="#i-cyltag"/></svg></button>
        <button aria-label="网"><svg><use href="#i-cylnet"/></svg></button>
        <button aria-label="渲染"><svg><use href="#i-gem"/></svg></button>
      </div>
      <span>图像 (进阶)</span>
    </div>
    <div class="group">
      <div class="tools">
        <button aria-label="缩放"><svg><use href="#i-zoompm"/></svg></button>
        <button aria-label="全部"><svg><use href="#i-zoomfit"/></svg></button>
        <button aria-label="原始比例"><svg viewBox="0 0 24 24"><path d="M4 5h16v14H4z" fill="#eef3fc" stroke="#333" stroke-width="1.500"/><use href="#corners"/><text x="12" y="16" text-anchor="middle" font-size="10" font-weight="700">1:1</text></svg></button>
        <button aria-label="方向"><svg><use href="#i-arrow"/></svg></button>
        <button aria-label="旋转"><svg><use href="#i-orbit"/></svg></button>
        <button aria-label="观察"><svg><use href="#i-face"/></svg></button>
      </div>
      <span>视图</span>
    </div>
    <div class="group">
      <div class="tools">
        <button aria-label="坐标"><svg><use href="#i-axes"/></svg></button>
        <button aria-label="移到"><svg><use href="#i-axesto"/></svg></button>
        <button aria-label="交换"><svg><use href="#i-axesswap"/></svg></button>
      </div>
      <span>工作平面</span>
    </div>
    <div class="group">
      <div class="tools">
        <button aria-label="颜色"><svg><use href="#i-colors"/></svg></button>
        <button aria-label="文档"><svg><use href="#i-doc"/></svg></button>
        <button aria-label="工具"><svg><use href="#i-wrench"/></svg></button>
        <button aria-label="配置"><svg><use href="#i-config"/></svg></button>
        <button aria-label="捕捉"><svg><use href="#i-snap"/></svg></button>
        <button aria-label="栅格"><svg><use href="#i-grid"/></svg></button>
      </div>
      <span>系统</span>
    </div>
    <div class="group">
      <div class="tools">
        <button aria-label="块"><svg><use href="#i-block"/></svg></button>
        <button aria-label="分割"><svg><use href="#i-split"/></svg></button>
        <button aria-label="拉伸"><svg><use href="#i-extrude"/></svg></button>
        <button aria-label="旋转体"><svg><use href="#i-revolve"/></svg></button>
        <button aria-label="扫掠"><svg><use href="#i-sweep"/></svg></button>
        <button aria-label="曲面"><svg><use href="#i-surface"/></svg></button>
      </div>
      <span>建模</span>
    </div>
  </div>
</section>

<main class="work">
  <aside class="dock">
    <div class="dock-grip"></div>
    <div class="dock-tools">
      <button aria-label="缩放"><svg><use href="#i-zooms"/></svg></button>
      <button aria-label="直线"><svg><use href="#i-line"/></svg></button>
      <button aria-label="全部"><svg><use href="#i-fit"/></svg></button>
      <button aria-label="曲线"><svg><use href="#i-curve"/></svg></button>
      <button aria-label="视图"><svg><use href="#i-zoompm"/><use href="#caret"/></svg></button>
      <button aria-label="确认"><svg><use href="#i-check"/></svg></button>
      <button aria-label="坐标"><svg><use href="#i-axes"/><use href="#caret"/></svg></button>
      <button aria-label="样条"><svg><use href="#i-spline"/></svg></button>
      <button aria-label="属性"><svg><use href="#i-palette"/><use href="#caret"/></svg></button>
      <button aria-label="平面"><svg><use href="#i-plane"/></svg></button>
      <button aria-label="刷新"><svg><use href="#i-refresh"/><use href="#caret"/></svg></button>
      <button aria-label="实体"><svg><use href="#i-solid"/></svg></button>
      <button aria-label="帮助"><svg><use href="#i-help"/><use href="#caret"/></svg></button>
      <button aria-label="标注"><svg><use href="#i-dim"/></svg></button>
      <button aria-label="删除"><svg><use href="#i-bin"/><use href="#caret"/></svg></button>
      <button aria-label="撤销"><svg><use href="#i-undo"/><use href="#caret"/></svg></button>
      <button aria-label="导航"><svg><use href="#i-helm"/><use href="#caret"/></svg></button>
      <button aria-label="导入"><svg><use href="#i-import"/></svg></button>
    </div>
  </aside>

  <section class="viewport">
    <svg class="drawing">
      <g class="wires">
        <line x1="155" y1="0" x2="155" y2="594"/>
        <line x1="155" y1="593" x2="100%" y2="593"/>
        <line x1="885" y1="0" x2="885" y2="210"/>
        <line x1="885" y1="210" x2="100%" y2="210"/>
        <line x1="338" y1="539" x2="703" y2="539"/>
        <path d="M338 539l182-182 183 182"/>
      </g>
      <rect class="plane" x="9" y="448" width="292" height="291"/>
      <path class="corner" d="M9 478v-30h30M271 448h30v30M301 709v30h-30M39 739H9v-30"/>
      <g class="triad">
        <path d="M155 593V542" stroke="#10a040" stroke-width="4"/>
        <path d="M155 530l5 12h-10z" fill="#1aa03c"/>
        <path d="M155 593h31" stroke="#a03a44" stroke-width="4"/>
        <path d="M199 593l-13 5v-10z" fill="#a8323c"/>
        <circle cx="155" cy="594" r="5" fill="#20a0aa"/>
        <path d="M151 589h8l-8 10h8" fill="none" stroke="#cfd6e0"/>
        <text x="150" y="528">Y</text><text x="203" y="600">X</text>
      </g>
      <path d="M76 744h30v30H76z" fill="#748058" stroke="#f0ea50" shape-rendering="crispEdges"/>
      <g class="triad">
        <path d="M75 776V724" stroke="#12a012" stroke-width="4"/>
        <path d="M75 713l5 13h-10z" fill="#12c412"/>
        <path d="M75 776h31" stroke="#c03020" stroke-width="4"/>
        <path d="M119 776l-13 5v-10z" fill="#d01808"/>
        <circle cx="75" cy="776" r="5" fill="#20b0b8"/>
        <path d="M71 771h8l-8 10h8" fill="none" stroke="#cfd6e0"/>
        <text x="70" y="710">Y</text><text x="122" y="782">X</text>
      </g>
      <circle cx="400" cy="501" r="24" fill="#2d3300"/>
      <path d="M377 500l23-23" stroke="#22c83c"/>
      <path class="cross" d="M388 501h25M400 489v25"/>
    </svg>
    <div class="viewbar">
      <button aria-label="菜单"><svg><use href="#i-bars"/></svg></button>
      <button aria-label="全部"><svg><use href="#i-fit"/></svg></button>
      <button aria-label="缩放"><svg><use href="#i-zooms"/></svg></button>
      <button aria-label="坐标"><svg><use href="#i-axesdark"/></svg></button>
      <button aria-label="上视图"><svg><use href="#i-top"/></svg></button>
      <button aria-label="下视图"><svg><use href="#i-bottom"/></svg></button>
      <button aria-label="后视图"><svg><use href="#i-back"/></svg></button>
      <button aria-label="前视图"><svg><use href="#i-front"/></svg></button>
      <button aria-label="左视图"><svg><use href="#i-left"/></svg></button>
      <button aria-label="右视图"><svg><use href="#i-right"/></svg></button>
      <button aria-label="轴测"><svg><use href="#i-iso"/></svg></button>
    </div>
    <div class="viewbar vertical">
      <button aria-label="线框"><svg><use href="#i-cylwire"/></svg></button>
      <button aria-label="消隐"><svg><use href="#i-cylhid"/></svg></button>
      <button class="on" aria-label="着色"><svg><use href="#i-cylblue"/></svg></button>
      <button aria-label="透明"><svg><use href="#i-cylglass"/></svg></button>
      <button aria-label="网格"><svg><use href="#i-cylmesh"/></svg></button>
    </div>
  </section>

  <div class="splitter"></div>

  <section class="panel">
    <header class="panel-head">
      <h2>图层</h2>
      <button aria-label="固定"><svg><use href="#i-pin"/></svg></button>
      <button aria-label="关闭"><svg><use href="#i-x"/></svg></button>
    </header>
    <div class="panel-tabs">
      <button class="active">图层</button><button>过滤器</button><button>组合</button>
    </div>
    <div class="panel-tools">
      <button aria-label="查找"><svg><use href="#i-search"/></svg></button>
      <i></i>
      <button aria-label="选取"><svg><use href="#i-pick"/></svg></button>
      <button aria-label="选取可见"><svg><use href="#i-pickeye"/></svg></button>
      <button aria-label="移动"><svg><use href="#i-sheets"/></svg></button>
      <button aria-label="切换可见"><svg><use href="#i-eyered"/></svg></button>
      <button aria-label="恢复"><svg><use href="#i-handlayer"/></svg></button>
      <button aria-label="检查"><svg><use href="#i-checkdoc"/></svg></button>
      <button aria-label="删除"><svg><use href="#i-bin"/></svg></button>
      <i></i>
      <button aria-label="树"><svg><use href="#i-tree"/></svg></button>
      <i></i>
      <button aria-label="保存"><svg><use href="#i-savedoc"/></svg></button>
    </div>

    <div class="grid-box">
      <div class="grid-clip">
        <table class="layers">
          <colgroup><col class="c-index"><col class="c-name"><col class="c-flag"><col class="c-flag"><col class="c-flag"><col class="c-flag"></colgroup>
          <thead>
            <tr><th>索引</th><th>图层名称</th><th>当前的</th><th>可见的</th><th>锁定</th><th>信息</th></tr>
          </thead>
          <tbody>
            <tr class="sel"><td>0</td><td>LAYER0</td><td><svg class="ic-cursor"><use href="#i-cursor"/></svg></td><td><svg class="ic-eye"><use href="#i-eye"/></svg></td><td><svg class="ic-lock"><use href="#i-lock"/></svg></td><td><svg class="ic-tick"><use href="#i-tick"/></svg></td></tr>
            <tr class="sel"><td>1</td><td>LAYER1</td><td></td><td><svg class="ic-eye"><use href="#i-eye"/></svg></td><td><svg class="ic-lock"><use href="#i-lock"/></svg></td><td></td></tr>
            <tr><td>2</td><td></td><td></td><td></td><td></td><td></td></tr>
            <tr><td>3</td><td></td><td></td><td></td><td></td><td></td></tr>
            <tr><td>4</td><td></td><td></td><td></td><td></td><td></td></tr>
            <tr><td>5</td><td></td><td></td><td></td><td></td><td></td></tr>
            <tr><td>6</td><td></td><td></td><td></td><td></td><td></td></tr>
            <tr><td>7</td><td></td><td></td><td></td><td></td><td></td></tr>
            <tr><td>8</td><td></td><td></td><td></td><td></td><td></td></tr>
            <tr><td>9</td><td></td><td></td><td></td><td></td><td></td></tr>
            <tr><td>10</td><td></td><td></td><td></td><td></td><td></td></tr>
            <tr><td>11</td><td></td><td></td><td></td><td></td><td></td></tr>
            <tr><td>12</td><td></td><td></td><td></td><td></td><td></td></tr>
            <tr><td>13</td><td></td><td></td><td></td><td></td><td></td></tr>
            <tr><td>14</td><td></td><td></td><td></td><td></td><td></td></tr>
            <tr><td>15</td><td></td><td></td><td></td><td></td><td></td></tr>
          </tbody>
        </table>
      </div>
      <div class="vscroll">
        <svg><use href="#i-chev"/></svg><b></b><svg class="down"><use href="#i-chev"/></svg>
      </div>
      <div class="hscroll">
        <svg class="back"><use href="#i-chev"/></svg><b></b><svg class="fwd"><use href="#i-chev"/></svg>
      </div>
    </div>

    <div class="hsplit"></div>

    <div class="panel-tools lower">
      <button aria-label="新建群组"><svg><use href="#i-adddoc"/></svg></button>
      <button aria-label="查看群组"><svg><use href="#i-eyedoc"/></svg></button>
      <button aria-label="删除群组"><svg><use href="#i-bin"/></svg></button>
    </div>
    <div class="groups-box">
      <table>
        <thead><tr><th class="g-index">索引</th><th class="g-name">群组</th><th></th></tr></thead>
      </table>
    </div>
  </section>

  <aside class="side">
    <button class="side-btn" aria-label="图层"><svg><use href="#i-layers"/></svg></button>
    <span>图层</span>
  </aside>
</main>

<footer class="status">
  <div class="row">
    <i class="dots"></i>
    <label class="find"><input type="text" aria-label="搜索"><svg viewBox="0 0 16 16"><path d="M7 9l-6 6" stroke="#4d6082" stroke-width="3"/><circle cx="10" cy="6" r="4" fill="none" stroke="#4d6082" stroke-width="2"/></svg></label>
    <i class="dots"></i>
    <span class="w-abs">绝对 XY 上视图</span>
    <span class="w-view line">绝对视图</span>
    <i class="dots"></i>
    <strong class="w-layer">LAYER0</strong>
    <span class="w-gap line"></span>
    <span class="swatch line"><b></b></span>
    <span class="swatch line"><b></b></span>
    <span class="swatch line"><b></b></span>
    <span class="w-globe line"><svg><use href="#s-globe"/></svg></span>
  </div>
  <div class="row second">
    <span class="w-lock line">拴牢</span>
    <button class="line" aria-label="捕捉"><svg><use href="#s-snap"/></svg></button>
    <button class="line" aria-label="智能"><svg><use href="#s-magic"/></svg></button>
    <button class="line" aria-label="拖动"><svg><use href="#s-hand"/></svg></button>
    <button class="line" aria-label="帮助"><svg><use href="#i-help"/></svg></button>
    <button class="line" aria-label="干涉"><svg><use href="#s-boxes"/></svg></button>
    <button class="line" aria-label="平面"><svg><use href="#s-plane"/></svg></button>
    <button class="line" aria-label="层叠"><svg><use href="#s-stack"/></svg></button>
    <button class="line" aria-label="旋转"><svg><use href="#s-rotate"/></svg></button>
    <button class="line" aria-label="视窗"><svg><use href="#s-quad"/></svg></button>
    <span class="w-ls line">LS: 1.00 PS: 1.00</span>
    <span class="w-unit line">单位: 毫米</span>
    <span class="w-xyz line">X = 0066.999 Y = 0024.933 Z = 0000.000</span>
  </div>
</footer>

<div class="taskbar">
  <button class="sys" aria-label="开始"><svg width="20" height="20"><use href="#t-win"/></svg></button>
  <button class="sys" aria-label="助手"><svg width="20" height="20"><use href="#t-bot"/></svg></button>
  <button class="sys" aria-label="任务视图"><svg width="24" height="20"><use href="#t-view"/></svg></button>
  <button class="app first" aria-label="Chrome"><svg width="28" height="28"><use href="#t-chrome"/></svg></button>
  <button class="app" aria-label="Internet Explorer"><svg width="28" height="28"><use href="#t-ie"/></svg></button>
  <button class="app" aria-label="Outlook"><svg width="28" height="28"><use href="#t-outlook"/></svg></button>
  <button class="app" aria-label="计算器"><svg width="22" height="30"><use href="#t-calc"/></svg></button>
  <button class="app current" aria-label="VISI"><svg width="30" height="30" viewBox="0 0 30 30"><path d="M1 1h28v22l-6 6H1z" fill="#fff" stroke="#6eae2c" stroke-width="2"/><text x="15" y="21" text-anchor="middle" font-size="17" font-weight="700" fill="#4d9a20">Vi</text></svg></button>
  <button class="app open" aria-label="文件资源管理器"><svg width="28" height="28"><use href="#t-files"/></svg></button>
  <button class="app open" aria-label="照片"><svg width="28" height="28"><use href="#t-photo"/></svg></button>
  <button class="app open" aria-label="Camtasia"><svg width="30" height="30"><use href="#t-cam"/></svg></button>
  <div class="tray">
    <svg><use href="#t-up"/></svg>
    <svg><use href="#t-mute"/></svg>
    <svg><use href="#t-battery"/></svg>
    <svg><use href="#t-wifi"/></svg>
    <span>ENG</span>
    <time>14:17<br>2019/1/10</time>
    <svg class="note"><use href="#t-note"/></svg>
  </div>
</div>

</body>
</html>
```
FILE: styles.css
```css
* {
  box-sizing: border-box;
}
body {
  display: flex;
  flex-direction: column;
  height: 100vh;
  margin: 0;
  overflow: hidden;
  font: 15px/20px "Open Sans", "Noto Sans CJK SC", sans-serif;
  color: #000;
  background: #d6dbe9;
}
button {
  display: flex;
  align-items: center;
  justify-content: center;
  padding: 0;
  border: none;
  font: inherit;
  color: inherit;
  background: none;
}
svg {
  display: block;
  flex: none;
}
h1, h2 {
  margin: 0;
  font-size: 15px;
  font-weight: 400;
}
a {
  color: inherit;
  text-decoration: none;
}
.sprite {
  position: absolute;
}

/* title bar */
.titlebar {
  display: grid;
  grid-template-columns: 1fr auto 1fr;
  align-items: center;
  height: 29px;
  background: #fff;
}
.titlebar h1 {
  padding-left: 236px;
  font-size: 16px;
}
.quick {
  display: flex;
  align-items: center;
}
.logo {
  width: 20px;
  margin: 0 14px 0 2px;
  font-weight: 700;
  text-align: center;
  color: #fff;
  background: #6cab2b;
  box-shadow: 5px 0 #fff, 6px 0 #a0a0a0;
}
.quick button {
  width: 31px;
  height: 28px;
}
.quick svg {
  width: 24px;
  height: 24px;
}
.more::before {
  content: "";
  border: 5px solid transparent;
  border-top-color: #000;
  border-bottom: none;
}
.quick .more {
  width: 27px;
  height: 16px;
  border-right: 1px solid #a0a0a0;
}
.winctl {
  display: flex;
  justify-content: flex-end;
  padding-right: 3px;
  color: #777;
}
.winctl button {
  width: 58px;
  height: 28px;
}
.winctl svg, .mdictl svg, .panel-head svg {
  width: 12px;
  height: 12px;
}

/* menu */
.menu {
  display: flex;
  align-items: center;
  gap: 18px;
  height: 26px;
  padding: 0 0 2px 9px;
}
.mdictl {
  display: flex;
  margin-left: auto;
  color: #888;
}
.mdictl button {
  width: 22px;
  height: 22px;
}

/* ribbon */
.ribbon {
  border-left: 11px solid #4d6082;
}
.tabs {
  display: flex;
  align-items: flex-end;
  height: 26px;
  padding-left: 4px;
}
.tabs button {
  height: 25px;
  padding: 0 5px 2px;
  border: solid #8e9bbc;
  border-width: 1px 1px 0 0;
  background: #e6eefa;
}
.tabs .more {
  width: 24px;
  border-left-width: 1px;
}
.tabs .active {
  height: 26px;
  font-weight: 700;
  background: #b5d1f8;
}
.tabs button + button {
  padding-left: 6px;
}
.groups {
  display: flex;
  height: 56px;
  padding-left: 4px;
}
.group {
  padding: 3px 11px 0 6px;
  text-align: center;
  background: radial-gradient(circle at 2px 2px, #a4acc0 1px, transparent 2px) 0 0 / 4px 5px repeat-y;
}
.tools {
  display: flex;
  height: 34px;
}
.tools button {
  width: 33px;
  height: 32px;
}
.tools svg {
  width: 24px;
  height: 24px;
}
.tools .on {
  width: 31px;
  margin: 0 1px;
  border: 1px solid #e5c365;
  background: #ffe07c;
}
.group span {
  display: block;
  line-height: 19px;
}

/* work area */
.work {
  display: flex;
  flex: 1;
  min-height: 0;
}
.dock {
  width: 152px;
  border-top: 11px solid #4d6082;
}
.dock-grip {
  height: 8px;
  background: radial-gradient(circle at 2px 4px, #a4acc0 1px, transparent 2px) 0 0 / 5px 8px repeat-x;
}
.dock-tools {
  display: grid;
  grid-template-columns: 34px 34px;
  grid-auto-rows: 34px;
  padding: 5px 0 0 5px;
}
.dock-tools svg {
  width: 24px;
  height: 24px;
}
.viewport {
  position: relative;
  flex: 1;
  min-width: 0;
  background: linear-gradient(#00001c, #00001f 8%, #1a2645 40%, #26365a 53%, #32496f 73%, #3f5b86 94%, #44628f);
}
.drawing {
  position: absolute;
  width: 100%;
  height: 100%;
}
.wires {
  fill: none;
  stroke: #32d0f0;
}
.wires line {
  shape-rendering: crispEdges;
}
.plane {
  fill: rgba(255, 255, 255, 0.07);
  stroke: #c3cbd8;
  stroke-dasharray: 4 4;
  shape-rendering: crispEdges;
}
.corner {
  fill: none;
  stroke: #dfe4ec;
  shape-rendering: crispEdges;
}
.triad text {
  font-size: 15px;
  fill: #ccd3de;
}
.cross {
  stroke: #fff;
  shape-rendering: crispEdges;
}
.viewbar {
  position: absolute;
  top: 5px;
  left: 5px;
  display: flex;
  gap: 4px;
}
.viewbar.vertical {
  top: 40px;
  flex-direction: column;
}
.viewbar button {
  width: 31px;
  height: 31px;
  background: rgba(168, 171, 192, 0.76);
}
.viewbar .on {
  border: 1px solid #f0d878;
  background: #94844a;
}
.viewbar svg {
  width: 26px;
  height: 26px;
}
.viewbar.vertical svg {
  width: 22px;
  height: 22px;
}
.splitter, .hsplit, .dots {
  background: radial-gradient(circle at 1px 1px, #9aa2b8 1px, transparent 1px) 0 0 / 4px 4px;
}
.splitter {
  width: 9px;
  border-right: 3px solid #d6dbe9;
}

/* layer panel */
.panel {
  display: flex;
  flex-direction: column;
  width: 625px;
  border-bottom: 1px solid #fff;
}
.panel-head {
  display: flex;
  align-items: center;
  height: 26px;
  padding: 0 3px 0 4px;
  color: #fff;
  background: #4d6082;
}
.panel-head h2 {
  flex: 1;
}
.panel-head button {
  width: 24px;
  height: 24px;
}
.panel-tabs {
  display: flex;
  align-items: flex-end;
  height: 31px;
  padding-left: 1px;
  border-bottom: 1px solid #fff;
}
.panel-tabs button {
  height: 25px;
  padding: 0 6px 0 4px;
  margin-right: 1px;
  background: #f0f0f0;
}
.panel-tabs .active {
  justify-content: flex-start;
  width: 56px;
  height: 27px;
  padding: 0 0 2px 7px;
  background: #fff;
}
.panel-tabs button:last-child {
  width: 51px;
  padding-right: 14px;
}
.panel-tools {
  display: flex;
  align-items: center;
  height: 55px;
  padding: 0 0 1px 7px;
}
.panel-tools button {
  width: 37px;
  height: 36px;
}
.panel-tools svg {
  width: 28px;
  height: 28px;
}
.panel-tools i {
  width: 2px;
  height: 32px;
  margin: 0 5px;
  border-left: 1px solid #8b93a8;
  border-right: 1px solid #fff;
}
.panel-tools.lower {
  padding: 1px 0 0 18px;
}
.grid-box {
  display: grid;
  grid-template: minmax(0, 1fr) 20px / minmax(0, 1fr) 21px;
  flex: 13 1 0;
  min-height: 0;
  margin: 0 6px;
  border: 1px solid #5f646e;
  background: #f0f0f0;
}
.grid-clip {
  overflow: hidden;
  background: #fff;
}
.layers {
  width: 612px;
  table-layout: fixed;
  border-collapse: separate;
  border-spacing: 0;
}
.c-index {
  width: 84px;
}
.c-name {
  width: 240px;
}
.c-flag {
  width: 72px;
}
.layers th {
  height: 24px;
  padding: 0 0 2px;
  border: solid #6f747e;
  border-width: 0 1px 1px 0;
  background: #f0f0f0;
}
.layers td {
  height: 25px;
  padding: 1px 4px 0;
  border: solid #c0c0c0;
  border-width: 0 1px 1px 0;
}
.layers td:first-child {
  text-align: right;
}
.layers td svg {
  margin-left: 2px;
}
.sel {
  color: #fff;
  background: #0173df;
}
.ic-cursor, .ic-tick {
  width: 20px;
  height: 20px;
}
.ic-eye {
  width: 24px;
  height: 14px;
}
.ic-lock {
  width: 24px;
  height: 18px;
}
.vscroll, .hscroll {
  display: flex;
  align-items: center;
  color: #555;
}
.vscroll {
  flex-direction: column;
  padding: 4px 0;
}
.hscroll {
  padding: 0 4px;
}
.vscroll svg, .hscroll svg {
  width: 12px;
  height: 14px;
}
.vscroll b {
  width: 18px;
  height: 22px;
  margin: 3px 0 auto;
  background: #cdcdcd;
}
.hscroll b {
  flex: 1;
  height: 19px;
  margin: 0 24px 0 5px;
  background: #cdcdcd;
}
.down {
  transform: rotate(180deg);
}
.back {
  transform: rotate(-90deg);
}
.fwd {
  transform: rotate(90deg);
}
.hsplit {
  height: 7px;
  margin: 5px 6px 0;
}
.groups-box {
  flex: 7 1 0;
  margin: 0 6px 5px;
  border: 1px solid #7b828e;
  background: #fff;
}
.groups-box table {
  width: 100%;
  table-layout: fixed;
  border-spacing: 0;
}
.groups-box th {
  height: 28px;
  padding: 0 7px;
  border-right: 1px solid #e0e0e0;
  font-weight: 400;
  text-align: left;
}
.groups-box th:last-child {
  border: none;
}
.g-index {
  width: 121px;
}
.g-name {
  width: 295px;
}
.side {
  width: 30px;
}
.side-btn {
  width: 30px;
  height: 31px;
  border: 1px solid #e5c365;
  background: #ffe07c;
}
.side-btn svg {
  width: 24px;
  height: 24px;
}
.side span {
  display: block;
  padding: 14px 2px;
  writing-mode: sideways-lr;
}

/* status bar */
.status {
  padding-top: 1px;
  font-size: 16px;
}
.row {
  display: flex;
  align-items: center;
  justify-content: flex-end;
  height: 20px;
}
.row.second {
  height: 22px;
  border-top: 1px solid #8f95a3;
}
.row > span, .row > strong {
  flex: none;
  height: 18px;
  padding-left: 11px;
  line-height: 18px;
  white-space: nowrap;
}
.row > .line {
  border-left: 1px solid #9aa1b2;
}
.row button {
  width: 40px;
  height: 20px;
}
.row svg {
  width: 21px;
  height: 21px;
}
.dots {
  width: 7px;
  height: 18px;
}
.find {
  display: flex;
  align-items: center;
  width: 168px;
  height: 18px;
  border-right: 3px solid #d6dbe9;
  background: #fff;
}
.find input {
  flex: 1;
  min-width: 0;
  padding: 0 4px;
  border: none;
  font: inherit;
  background: none;
}
.find svg {
  width: 16px;
  height: 16px;
}
.row > .w-abs {
  width: 142px;
  padding-left: 7px;
}
.w-view {
  width: 82px;
}
.row > .w-layer {
  width: 80px;
  padding-left: 7px;
}
.w-gap {
  width: 40px;
}
.row > .swatch {
  width: 55px;
  padding: 2px 6px 0 5px;
}
.swatch b {
  display: block;
  height: 14px;
  background: #45628f;
}
.w-globe {
  width: 45px;
}
.row .w-globe svg {
  width: 16px;
  height: 16px;
}
.w-lock {
  width: 55px;
}
.w-ls {
  width: 160px;
}
.w-unit {
  width: 93px;
}
.w-xyz {
  width: 333px;
}

/* taskbar */
.taskbar {
  display: flex;
  height: 50px;
  color: #fff;
  background: #002144;
}
.sys {
  width: 60px;
}
.app {
  width: 62px;
  height: 50px;
}
.first {
  margin-left: 3px;
}
.current {
  background: linear-gradient(#00498b 47px, #8fc3f2 47px);
}
.open {
  background: linear-gradient(#93c3f2, #93c3f2) center bottom / 51px 3px no-repeat;
}
.tray {
  display: flex;
  align-items: center;
  gap: 11px;
  margin-left: auto;
  margin-right: 5px;
  padding-right: 25px;
  border-right: 1px solid #5a6f88;
}
.tray svg {
  width: 20px;
  height: 20px;
}
.tray time {
  width: 86px;
  line-height: 22px;
  text-align: center;
}
.tray .note {
  margin-left: 6px;
}
```
